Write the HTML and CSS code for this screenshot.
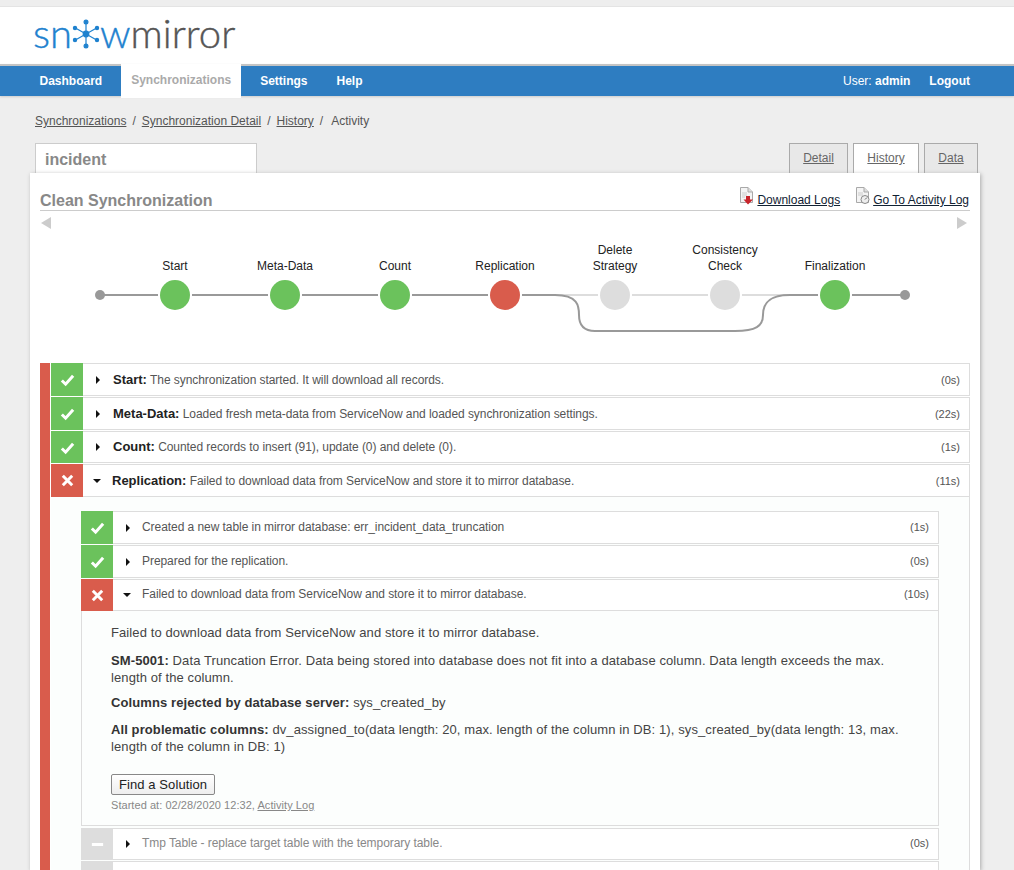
FILE: index.html
```html
<!DOCTYPE html>
<html lang="en">
<head>
<meta charset="utf-8">
<title>SnowMirror</title>
<link rel="stylesheet" href="styles.css">
</head>
<body>
<header class="brand">
  <div class="logo">
    <span class="logo-blue">sn</span><svg class="flake" width="30" height="30" viewBox="0 0 30 30"><g stroke="#1f82cf" stroke-width="1.2" fill="#1f82cf"><path d="M15 2V28M3.500 8.500 26.500 21.500M3.500 21.500 26.500 8.500" fill="none"/><circle cx="15" cy="15" r="2.800"/><circle cx="15" cy="3" r="1.900"/><circle cx="15" cy="27" r="1.900"/><circle cx="4" cy="9" r="1.600"/><circle cx="26" cy="9" r="1.600"/><circle cx="4" cy="21" r="1.600"/><circle cx="26" cy="21" r="1.600"/></g></svg><span class="logo-blue">w</span><span class="logo-gray">mirror</span>
  </div>
</header>
<nav class="nav">
  <a class="nav-item">Dashboard</a>
  <a class="nav-item nav-active">Synchronizations</a>
  <a class="nav-item">Settings</a>
  <a class="nav-item">Help</a>
  <span class="nav-user">User: <b>admin</b></span>
  <a class="nav-item nav-logout">Logout</a>
</nav>
<main class="page">
  <div class="crumbs"><a>Synchronizations</a><i>/</i><a>Synchronization Detail</a><i>/</i><a>History</a><i>/</i><span class="crumb-last">Activity</span></div>
  <div class="tabs-row">
    <div class="name-tab">incident</div>
    <div class="tabs">
      <a class="tab tab-detail">Detail</a>
      <a class="tab tab-active">History</a>
      <a class="tab tab-data">Data</a>
    </div>
  </div>
  <section class="panel">
    <div class="panel-head">
      <h2>Clean Synchronization</h2>
      <div class="panel-links">
        <span class="plink"><svg width="16" height="18" viewBox="0 0 16 18"><path d="M1.500 .5H9L13.500 5V15.500H1.500Z" fill="#f4f4f4" stroke="#a9a9a9"/><path d="M9 .5V5H13.500" fill="#ddd" stroke="#a9a9a9"/><path d="M3 6H8M3 8H8M3 10H6" stroke="#ccc"/><path d="M7 9H11V12.500H14L9 17.500 4.500 12.500H7Z" fill="#c8242b"/></svg><a>Download Logs</a></span>
        <span class="plink"><svg width="16" height="18" viewBox="0 0 16 18"><path d="M1.500 .5H9L13.500 5V15.500H1.500Z" fill="#f4f4f4" stroke="#a9a9a9"/><path d="M9 .5V5H13.500" fill="#ddd" stroke="#a9a9a9"/><path d="M3 6H8M3 8H8" stroke="#ccc"/><circle cx="10" cy="12.500" r="4" fill="#eee" stroke="#888"/><path d="M10 12.500 12 10.500" stroke="#666"/></svg><a>Go To Activity Log</a></span>
      </div>
    </div>
    <div class="arrows"><span class="arrow-left"></span><span class="arrow-right"></span></div>
    <svg class="flow" width="930" height="126" viewBox="10 0 930 126">
      <g fill="none" stroke-width="2">
        <path d="M520 65H568M602 65H678M712 65H765" stroke="#ddd"/>
        <path d="M70 65H128M162 65H238M272 65H348M382 65H458M492 65H525C548 65 549 76 549 85C549 94 553 101 565 101H705C726 101 733 96 733 85C733 75 737 65 760 65H788M822 65H875" stroke="#999"/>
      </g>
      <circle cx="70" cy="65" r="5" fill="#999"/><circle cx="875" cy="65" r="5" fill="#999"/>
      <circle cx="145" cy="65" r="15" fill="#6bc25c"/><circle cx="255" cy="65" r="15" fill="#6bc25c"/><circle cx="365" cy="65" r="15" fill="#6bc25c"/><circle cx="475" cy="65" r="15" fill="#d95c4c"/>
      <circle cx="585" cy="65" r="15" fill="#ddd"/><circle cx="695" cy="65" r="15" fill="#ddd"/><circle cx="805" cy="65" r="15" fill="#6bc25c"/>
      <g class="flow-label" text-anchor="middle">
        <text x="145" y="40">Start</text><text x="255" y="40">Meta-Data</text><text x="365" y="40">Count</text><text x="475" y="40">Replication</text>
        <text x="585" y="24">Delete</text><text x="585" y="40">Strategy</text><text x="695" y="24">Consistency</text><text x="695" y="40">Check</text><text x="805" y="40">Finalization</text>
      </g>
    </svg>
    <div class="log">
      <div class="row h33"><span class="st ok"><svg class="ck" viewBox="0 0 16 16"><path d="M2 9 6 13 14 4" /></svg></span><span class="caret r"></span><span class="msg"><b>Start:</b> The synchronization started. It will download all records.</span><span class="dur">(0s)</span></div>
      <div class="row h33"><span class="st ok"><svg class="ck" viewBox="0 0 16 16"><path d="M2 9 6 13 14 4" /></svg></span><span class="caret r"></span><span class="msg"><b>Meta-Data:</b> Loaded fresh meta-data from ServiceNow and loaded synchronization settings.</span><span class="dur">(22s)</span></div>
      <div class="row h32"><span class="st ok"><svg class="ck" viewBox="0 0 16 16"><path d="M2 9 6 13 14 4" /></svg></span><span class="caret r"></span><span class="msg"><b>Count:</b> Counted records to insert (91), update (0) and delete (0).</span><span class="dur">(1s)</span></div>
      <div class="row h33 last"><span class="st bad"><svg class="ck" viewBox="0 0 16 16"><path d="M3 3 13 13M13 3 3 13"/></svg></span><span class="caret d"></span><span class="msg"><b>Replication:</b> Failed to download data from ServiceNow and store it to mirror database.</span><span class="dur">(11s)</span></div>
      <div class="nested">
        <div class="row h33"><span class="st ok"><svg class="ck" viewBox="0 0 16 16"><path d="M2 9 6 13 14 4" /></svg></span><span class="caret r"></span><span class="msg">Created a new table in mirror database: err_incident_data_truncation</span><span class="dur">(1s)</span></div>
        <div class="row h33"><span class="st ok"><svg class="ck" viewBox="0 0 16 16"><path d="M2 9 6 13 14 4" /></svg></span><span class="caret r"></span><span class="msg">Prepared for the replication.</span><span class="dur">(0s)</span></div>
        <div class="row h32 last"><span class="st bad"><svg class="ck" viewBox="0 0 16 16"><path d="M3 3 13 13M13 3 3 13"/></svg></span><span class="caret d"></span><span class="msg">Failed to download data from ServiceNow and store it to mirror database.</span><span class="dur">(10s)</span></div>
        <div class="detail">
          <p>Failed to download data from ServiceNow and store it to mirror database.</p>
          <p><b>SM-5001:</b> Data Truncation Error. Data being stored into database does not fit into a database column. Data length exceeds the max. length of the column.</p>
          <p><b>Columns rejected by database server:</b> sys_created_by</p>
          <p><b>All problematic columns:</b> dv_assigned_to(data length: 20, max. length of the column in DB: 1), sys_created_by(data length: 13, max. length of the column in DB: 1)</p>
          <button class="btn">Find a Solution</button>
          <div class="started">Started at: 02/28/2020 12:32, <a>Activity Log</a></div>
        </div>
        <div class="row h32 muted"><span class="st off"><svg class="ck" viewBox="0 0 16 16"><path d="M2 8H14"/></svg></span><span class="caret r"></span><span class="msg">Tmp Table - replace target table with the temporary table.</span><span class="dur">(0s)</span></div>
        <div class="row h32 muted"><span class="st off"></span></div>
      </div>
    </div>
  </section>
</main>
</body>
</html>
```
FILE: styles.css
```css
* { box-sizing: border-box; }
html, body { margin: 0; height: 870px; overflow: hidden; }
body { background: #eee; font: 12px/16px "Liberation Sans", Arial, sans-serif; color: #444; padding-top: 6px; }
a { color: inherit; }
.brand { height: 58px; background: #fff; padding: 8px 0 0 33px; border-top: 1px solid #e4e4e4; }
.logo { display: flex; align-items: center; height: 37px; font: 300 40px/37px Lato, sans-serif; -webkit-text-stroke: .4px; }
.logo-blue { color: #1f82cf; }
.logo-gray { color: #555; }
.flake { margin: 0 -1px; }
.nav { height: 32px; background: #2e7dc1; border-top: 2px solid #c4c4c4; box-shadow: 0 1px 2px #ccc; display: flex; color: #fff; font-weight: bold; padding-left: 25px; align-items: stretch; }
.nav-item { padding: 0 14.500px; line-height: 30px; }
.nav-active { background: #fff; color: #aaa; margin: -2px 4.500px 0; height: 34px; line-height: 33px; padding: 0; width: 120px; text-align: center; }
.nav-user { margin-left: auto; line-height: 30px; font-weight: normal; }
.nav-logout { padding: 0 44px 0 19px; }
.page { padding: 0 33px 0 30px; }
.crumbs { padding: 17px 0 0 5px; height: 47px; color: #555; }
.crumbs a { text-decoration: underline; }
.crumbs i { font-style: normal; margin: 0 6px; }
.crumb-last { margin-left: 2px; }
.tabs-row { display: flex; justify-content: space-between; align-items: flex-end; height: 30px; padding-left: 5px; }
.name-tab { width: 222px; height: 30px; background: #fff; border: 1px solid #ccc; border-bottom: 0; font: bold 16px/31px "Liberation Sans", sans-serif; color: #888; padding-left: 9px; }
.tabs { display: flex; gap: 5px; margin-right: 3px; }
.tab { width: 59px; height: 30px; border: 1px solid #aaa; border-bottom: 0; background: #e8e8e8; color: #666; text-decoration: underline; line-height: 29px; text-align: center; }
.tab-active { width: 66px; background: #fff; }
.tab-data { width: 54px; }
.panel { width: 950px; height: 697px; background: #fff; box-shadow: 1px 1px 4px #aaa; padding: 0 10px; overflow: hidden; position: relative; }
.panel-head { height: 38px; border-bottom: 1px solid #ccc; display: flex; justify-content: space-between; align-items: flex-end; }
.panel-head h2 { margin: 0; font-size: 16px; line-height: 18px; color: #888; padding-bottom: 0; }
.panel-links { display: flex; gap: 15px; padding-bottom: 2px; margin-right: 1px; color: #123; }
.plink { display: flex; align-items: flex-end; gap: 2px; }
.plink svg { margin-bottom: 3px; }
.plink a { text-decoration: underline; }
.arrows { display: flex; justify-content: space-between; padding: 6px 3px 0 1px; height: 19px; }
.arrow-left { border: 6px solid transparent; border-left: 0; border-right: 10px solid #ccc; height: 12px; }
.arrow-right { border: 6px solid transparent; border-right: 0; border-left: 10px solid #ccc; height: 12px; }
.flow { display: block; margin-bottom: 7px; }
.flow-label { font: 12px "Liberation Sans", sans-serif; fill: #222; }
.log { border-left: 10px solid #d95c4c; padding-left: 1px; display: flex; flex-direction: column; }
.row { display: flex; align-items: center; background: #fff; border: 1px solid #ddd; border-left: 0; margin-bottom: 1px; flex: none; color: #555; }
.row.last { margin-bottom: 0; }
.h33 { height: 33px; }
.h32 { height: 32px; }
.st { width: 32px; align-self: stretch; margin: -1px 0; display: flex; align-items: center; justify-content: center; flex: none; }
.ok { background: #6bc25c; }
.bad { background: #d95c4c; }
.off { background: #ddd; }
.ck { width: 15px; height: 15px; margin-left: 1px; fill: none; stroke: #fff; stroke-width: 3.200px; }
.caret { width: 0; height: 0; flex: none; border: 4px solid transparent; }
.caret.r { border-right: 0; border-left: 4px solid #111; margin: 0 13px 0 13px; }
.caret.d { border-bottom: 0; border-top: 4px solid #111; margin: 0 11px 0 10px; }
.msg { flex: 1; letter-spacing: -.06px; }
.msg b { color: #222; font-size: 13px; letter-spacing: 0; }
.dur { padding-right: 9px; color: #555; font-size: 11px; }
.nested { background: #fcfefd; border-right: 1px solid #ddd; padding: 14px 30px 0 30px; display: flex; flex-direction: column; }
.nested .caret.r { margin-right: 12px; }
.nested .msg, .nested .dur { margin-bottom: 2px; }
.detail { height: 215px; margin-bottom: 2px; padding: 13px 30px 0 29px; border: 1px solid #ddd; border-top: 0; color: #444; font-size: 13px; letter-spacing: .1px; line-height: 17px; }
.detail p { margin: 0 0 10px; }
.detail p:first-child { margin-bottom: 11px; }
.detail p:nth-child(2) { margin-bottom: 8px; }
.detail b { color: #333; }
.btn { display: block; font: 13px/16px "Liberation Sans", sans-serif; letter-spacing: .1px; height: 21px; width: 104px; padding: 0; margin-top: 19px; background: linear-gradient(#fff, #eee); border: 1px solid #888; border-radius: 2px; color: #222; }
.started { font-size: 11px; letter-spacing: .05px; color: #888; margin-top: 3px; line-height: 14px; }
.started a { text-decoration: underline; }
.muted { color: #888; }
```
